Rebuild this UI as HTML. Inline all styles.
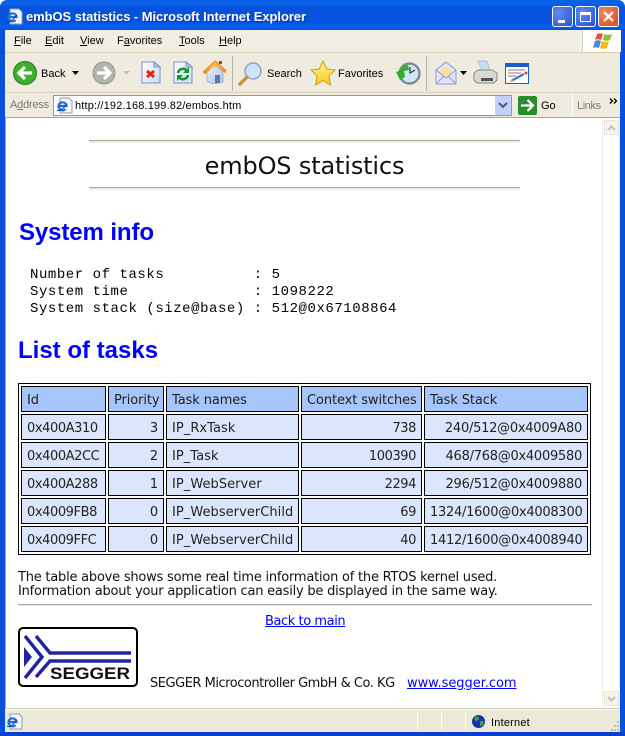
<!DOCTYPE html>
<html><head><meta charset="utf-8"><title>embOS statistics</title>
<style>
html,body{margin:0;padding:0;background:#fff}
#w{position:relative;width:625px;height:736px;overflow:hidden;background:#fff;font-family:"DejaVu Sans",sans-serif}
.a{position:absolute;white-space:pre}
.ui{font-family:"Liberation Sans",sans-serif;font-size:11px;color:#000;line-height:14px}
.b{position:absolute}
.t{font-size:13px;line-height:16px;color:#111;letter-spacing:-.22px}
.m{font-family:"Liberation Mono",monospace;font-size:14px;line-height:17px;color:#000;left:30px;letter-spacing:.55px}
h2{position:absolute;margin:0;left:18px;font:bold 24px/28px "Liberation Sans",sans-serif;color:#0000ff;letter-spacing:0}
.c{position:absolute;box-sizing:border-box;border:1px solid #000;background:#dbe6fd;height:26px;font-size:13px;line-height:28px;color:#222;padding:0 5px;white-space:pre;letter-spacing:-.1px;overflow:hidden}
.h{background:#a6c6fb}
.r{text-align:right}
.n{letter-spacing:-.42px}
.s{letter-spacing:-.26px}
.k{letter-spacing:.05px}
a{color:#0000ff;text-decoration:underline}
</style></head><body><div id="w">
<svg width="0" height="0" style="position:absolute"><defs>
<linearGradient id="pg" x1="0" y1="0" x2="1" y2="1"><stop offset="0" stop-color="#fff"/><stop offset="1" stop-color="#c9d9f6"/></linearGradient>
<linearGradient id="st" x1="0" y1="0" x2="0" y2="1"><stop offset="0" stop-color="#fff3a0"/><stop offset="1" stop-color="#f8c814"/></linearGradient>
<linearGradient id="hm" x1="0" y1="0" x2="1" y2="1"><stop offset="0" stop-color="#eef3fc"/><stop offset="1" stop-color="#a9c0ea"/></linearGradient>
</defs></svg>
<!-- title bar -->
<div class="b" style="left:0;top:0;width:625px;height:30px;background:linear-gradient(#0a5fe0 0,#0a63ea 3px,#0553dc 8px,#0553e0 22px,#0660f0 27px,#0350d8 30px);border-radius:7px 7px 0 0"></div>
<div class="b" style="left:0;top:30px;width:5px;height:706px;background:#0850dc"></div>
<div class="b" style="left:620px;top:30px;width:5px;height:706px;background:#0850dc"></div>
<div class="b" style="left:0;top:732px;width:625px;height:4px;background:#0a3fd0"></div>
<svg class="b" style="left:6px;top:8px" width="17" height="17" viewBox="0 0 17 17"><path d="M4 1h9l3 3v12H4z" fill="#f4f6fb" stroke="#8a9cba"/><path d="M2.500 9h8a4 4 0 1 0-1 3" fill="none" stroke="#1f6fd6" stroke-width="2.200"/><path d="M1 13c2 2 6-1 10-6" fill="none" stroke="#123e8c"/></svg>
<div class="a" style="left:26px;top:9px;font:bold 13px/16px 'Liberation Sans',sans-serif;color:#fff;letter-spacing:-.07px;text-shadow:1px 1px 0 #0a3a9c">embOS statistics - Microsoft Internet Explorer</div>
<!-- window buttons -->
<div class="b" style="left:552px;top:6px;width:21px;height:21px;box-sizing:border-box;border:1px solid #fff;border-radius:3px;background:radial-gradient(circle at 30% 30%,#5f8df0,#2a50d0)"></div>
<div class="b" style="left:558px;top:20px;width:7px;height:3px;background:#fff"></div>
<div class="b" style="left:575px;top:6px;width:21px;height:21px;box-sizing:border-box;border:1px solid #fff;border-radius:3px;background:radial-gradient(circle at 30% 30%,#5f8df0,#2a50d0)"></div>
<div class="b" style="left:580px;top:12px;width:11px;height:10px;box-sizing:border-box;border:1px solid #fff;border-top-width:3px"></div>
<div class="b" style="left:598px;top:6px;width:21px;height:21px;box-sizing:border-box;border:1px solid #fff;border-radius:3px;background:radial-gradient(circle at 30% 30%,#ef8a68,#d04a20)"></div>
<svg class="b" style="left:598px;top:6px" width="21" height="21"><path d="M6 6l9 9M15 6l-9 9" stroke="#fff" stroke-width="2.200"/></svg>
<!-- menu -->
<div class="b" style="left:5px;top:30px;width:615px;height:22px;background:#f1eee3;border-bottom:1px solid #d8d2bd"></div>
<div class="b" style="left:582px;top:30px;width:38px;height:22px;background:#fff;border-left:1px solid #d8d2bd"></div>
<svg class="b" style="left:592px;top:31px" width="22" height="20" viewBox="0 0 22 20"><path d="M5 3c2-1 4-1 6 0l-2 6c-2-1-4-1-6 0z" fill="#e8532a"/><path d="M12 3c2 1 5 1 8 0l-2 6c-3 1-5 1-7 0z" fill="#8ac832"/><path d="M3 10c2-1 4-1 6 0l-2 7c-2-1-4-1-6 0z" fill="#4a86e0"/><path d="M10 10c2 1 5 1 7 0l-2 7c-3 1-5 1-7 0z" fill="#f5b914"/></svg>
<span class="a ui" style="left:14px;top:34px"><u>F</u>ile</span>
<span class="a ui" style="left:45px;top:34px"><u>E</u>dit</span>
<span class="a ui" style="left:80px;top:34px"><u>V</u>iew</span>
<span class="a ui" style="left:117px;top:34px">F<u>a</u>vorites</span>
<span class="a ui" style="left:179px;top:34px"><u>T</u>ools</span>
<span class="a ui" style="left:219px;top:34px"><u>H</u>elp</span>
<!-- toolbar -->
<div class="b" style="left:5px;top:53px;width:615px;height:39px;background:#efebdf;border-bottom:1px solid #d8d2bd"></div>
<svg class="b" style="left:12px;top:60px" width="26" height="26" viewBox="0 0 26 26"><circle cx="13" cy="13" r="11.500" fill="#3fb02e" stroke="#1f7a1c"/><path d="M20 13H9M13 7l-6 6 6 6" fill="none" stroke="#fff" stroke-width="3.200"/></svg>
<span class="a ui" style="left:41px;top:67px">Back</span>
<svg class="b" style="left:72px;top:71px" width="7" height="4"><path d="M0 0h7L3.500 4z" fill="#000"/></svg>
<svg class="b" style="left:91px;top:60px" width="26" height="26" viewBox="0 0 26 26"><circle cx="13" cy="13" r="11" fill="#b5b4aa" stroke="#979689"/><path d="M6 13h11M13 7l6 6-6 6" fill="none" stroke="#fff" stroke-width="3.200"/></svg>
<svg class="b" style="left:123px;top:71px" width="7" height="4"><path d="M0 0h7L3.500 4z" fill="#c5c3b8"/></svg>
<svg class="b" style="left:141px;top:61px" width="20" height="23" viewBox="0 0 20 23"><path d="M1 1h12l6 5v16H1z" fill="url(#pg)" stroke="#7d93c8"/><path d="M13 1v5h6z" fill="#b8cbee" stroke="#7d93c8"/><path d="M6 10l7 6M13 10l-7 6" stroke="#e8240e" stroke-width="3"/></svg>
<svg class="b" style="left:173px;top:61px" width="20" height="23" viewBox="0 0 20 23"><path d="M1 1h12l6 5v16H1z" fill="url(#pg)" stroke="#7d93c8"/><path d="M13 1v5h6z" fill="#b8cbee" stroke="#7d93c8"/><path d="M5 12a5 5 0 0 1 9-2M15 14a5 5 0 0 1-9 2" fill="none" stroke="#17962a" stroke-width="2.600"/><path d="M16 6v6h-6zM4 20v-6h6z" fill="#17962a"/></svg>
<svg class="b" style="left:203px;top:60px" width="24" height="24" viewBox="0 0 24 24"><path d="M4 11l8-7 8 7v11l-6 1.500H9L4 21z" fill="url(#hm)" stroke="#8da4cc" stroke-width=".7"/><path d="M0 12L12 1l2 1.500 9 8-1 2L12 4.500 2 13.500z" fill="#f5a032" stroke="#e08a20" stroke-width="1"/><path d="M2 11L12 2l8 7-8-2z" fill="#fbb64a"/><rect x="12" y="15" width="5" height="8" fill="#5f78a8"/><rect x="16" y="1" width="3" height="3" fill="#b8352a"/></svg>
<div class="b" style="left:232px;top:56px;width:1px;height:35px;background:#b9b5a5"></div>
<svg class="b" style="left:238px;top:61px" width="25" height="25" viewBox="0 0 25 25"><circle cx="15" cy="10" r="8" fill="#cfe4fa" stroke="#8aa5c4" stroke-width="1.500"/><path d="M9 16L2 23" stroke="#c99240" stroke-width="3.400" stroke-linecap="round"/></svg>
<span class="a ui" style="left:267px;top:67px">Search</span>
<svg class="b" style="left:310px;top:60px" width="26" height="26" viewBox="0 0 26 26"><path d="M13 1l3.700 8 8.300 1-6 6 1.500 9L13 20.500 5.500 25 7 16 1 10l8.300-1z" fill="url(#st)" stroke="#c8a020"/></svg>
<span class="a ui" style="left:338px;top:67px">Favorites</span>
<svg class="b" style="left:396px;top:61px" width="25" height="25" viewBox="0 0 25 25"><circle cx="13.500" cy="12.500" r="10" fill="#cfe6f4" stroke="#7d8a98" stroke-width="2.400"/><path d="M14 6v6l5-3" stroke="#333" stroke-width="1.200" fill="none"/><path d="M5 7a8 8 0 0 1 7-3l1 5-5 1 1 6-5 3-4-8 3-1z" fill="#38aa2c"/></svg>
<div class="b" style="left:426px;top:56px;width:1px;height:35px;background:#b9b5a5"></div>
<svg class="b" style="left:435px;top:61px" width="23" height="25" viewBox="0 0 23 25"><path d="M1 9L11 1l10 8v14H1z" fill="#dfe6fb" stroke="#8f9cd8"/><path d="M4 11l7-6 7 6-7 5z" fill="#fbe2a0"/><path d="M1 9l10 8 10-8M1 23l8-8M21 23l-8-8" fill="none" stroke="#8f9cd8"/></svg>
<svg class="b" style="left:460px;top:71px" width="7" height="4"><path d="M0 0h7L3.500 4z" fill="#000"/></svg>
<svg class="b" style="left:473px;top:60px" width="25" height="26" viewBox="0 0 25 26"><path d="M5 1h9l3 10H9z" fill="#c8ddf5" stroke="#9db4d0" stroke-width=".7"/><path d="M1 13l4-3h14l5 3v7l-3 3H4l-3-3z" fill="#d9d9d2" stroke="#8a8a84"/><path d="M8 18h12v3H8z" fill="#555"/></svg>
<svg class="b" style="left:505px;top:63px" width="24" height="22" viewBox="0 0 24 22"><rect x=".5" y=".5" width="23" height="20" fill="#fff" stroke="#1a5fc8"/><rect x="1" y="1" width="22" height="3" fill="#1a5fc8"/><path d="M3 7h17M3 10h13M3 13h8" stroke="#9c7080"/><path d="M6 18l13-7" stroke="#3a7ad8" stroke-width="2.200"/><path d="M4 19l3-3 1 2z" fill="#e8c040"/><circle cx="21" cy="10" r="1.500" fill="#d8402a"/></svg>
<!-- address bar -->
<div class="b" style="left:5px;top:93px;width:615px;height:24px;background:#efebdf"></div>
<span class="a ui" style="left:10px;top:98px;color:#7b7a70;letter-spacing:-.2px">A<u>d</u>dress</span>
<div class="b" style="left:53px;top:95px;width:459px;height:21px;box-sizing:border-box;background:#fff;border:1px solid #7f9db9"></div>
<svg class="b" style="left:56px;top:97px" width="17" height="17" viewBox="0 0 17 17"><path d="M4 1h9l3 3v12H4z" fill="#f4f6fb" stroke="#8a9cba"/><path d="M2.500 9h8a4 4 0 1 0-1 3" fill="none" stroke="#1f6fd6" stroke-width="2.200"/><path d="M1 13c2 2 6-1 10-6" fill="none" stroke="#123e8c"/></svg>
<span class="a ui" style="left:75px;top:99px;letter-spacing:.16px">http://192.168.199.82/embos.htm</span>
<div class="b" style="left:495px;top:96px;width:16px;height:19px;background:#c3d1f6;border-radius:2px"></div>
<svg class="b" style="left:498px;top:102px" width="11" height="8"><path d="M1 1l4 4 4-4" fill="none" stroke="#3f5c8c" stroke-width="2"/></svg>
<svg class="b" style="left:518px;top:96px" width="19" height="19" viewBox="0 0 19 19"><rect width="19" height="19" rx="2" fill="#2a8c2a"/><path d="M3 9.500h11M9.500 4l5.500 5.500L9.500 15" fill="none" stroke="#fff" stroke-width="2.200"/></svg>
<span class="a ui" style="left:541px;top:99px">Go</span>
<div class="b" style="left:572px;top:94px;width:1px;height:22px;background:#fff"></div>
<span class="a ui" style="left:577px;top:99px;color:#7b7a70;letter-spacing:-.4px">Links</span>
<svg class="b" style="left:609px;top:98px" width="9" height="6"><path d="M1 .5l2.500 2.500L1 5.500M5 .5l2.500 2.500L5 5.500" fill="none" stroke="#000" stroke-width="1.300"/></svg>
<div class="b" style="left:5px;top:117px;width:615px;height:1px;background:#a9a799"></div>
<!-- page frame -->
<div class="b" style="left:5px;top:118px;width:1px;height:591px;background:#aca899"></div>
<div class="b" style="left:619px;top:118px;width:1px;height:591px;background:#f1efe2"></div>
<div class="b" style="left:602px;top:118px;width:1px;height:590px;background:#eeede5"></div>
<div class="b" style="left:604px;top:120px;width:15px;height:15px;background:#f4f3ec;border:1px solid #e8e6da;box-sizing:border-box"></div>
<svg class="b" style="left:606px;top:124px" width="11" height="8"><path d="M2 6l3.500-3.500L9 6" fill="none" stroke="#c5c2b2" stroke-width="2"/></svg>
<div class="b" style="left:604px;top:691px;width:15px;height:15px;background:#f4f3ec;border:1px solid #e8e6da;box-sizing:border-box"></div>
<svg class="b" style="left:606px;top:695px" width="11" height="8"><path d="M2 2l3.500 3.500L9 2" fill="none" stroke="#c5c2b2" stroke-width="2"/></svg>
<!-- page -->
<div class="b" style="left:89px;top:140px;width:431px;height:1px;background:#a9a799"></div>
<div class="b" style="left:89px;top:141px;width:431px;height:2px;background:#f0eee2"></div>
<div class="a" style="left:89px;width:431px;top:152px;text-align:center;font-size:24px;line-height:29px;color:#111;letter-spacing:-.15px">embOS statistics</div>
<div class="b" style="left:89px;top:187px;width:431px;height:1px;background:#a9a799"></div>
<div class="b" style="left:89px;top:188px;width:431px;height:2px;background:#f0eee2"></div>
<h2 style="top:219px;left:19px;letter-spacing:-.1px">System info</h2>
<div class="a m" style="top:267px">Number of tasks          : 5</div>
<div class="a m" style="top:284px">System time              : 1098222</div>
<div class="a m" style="top:301px">System stack (size@base) : 512@0x67108864</div>
<h2 style="top:337px">List of tasks</h2>
<div class="b" style="left:18px;top:383px;width:573px;height:172px;box-sizing:border-box;border:1px solid #000"></div>
<div class="c h" style="left:21px;top:386px;width:85px">Id</div><div class="c h" style="left:108px;top:386px;width:56px">Priority</div><div class="c h" style="left:166px;top:386px;width:133px">Task names</div><div class="c h" style="left:301px;top:386px;width:121px">Context switches</div><div class="c h" style="left:424px;top:386px;width:164px">Task Stack</div>
<div class="c n" style="left:21px;top:414px;width:85px">0x400A310</div><div class="c r" style="left:108px;top:414px;width:56px">3</div><div class="c k" style="left:166px;top:414px;width:133px">IP_RxTask</div><div class="c r n" style="left:301px;top:414px;width:121px">738</div><div class="c r s" style="left:424px;top:414px;width:164px">240/512@0x4009A80</div>
<div class="c n" style="left:21px;top:442px;width:85px">0x400A2CC</div><div class="c r" style="left:108px;top:442px;width:56px">2</div><div class="c k" style="left:166px;top:442px;width:133px">IP_Task</div><div class="c r n" style="left:301px;top:442px;width:121px">100390</div><div class="c r s" style="left:424px;top:442px;width:164px">468/768@0x4009580</div>
<div class="c n" style="left:21px;top:470px;width:85px">0x400A288</div><div class="c r" style="left:108px;top:470px;width:56px">1</div><div class="c k" style="left:166px;top:470px;width:133px">IP_WebServer</div><div class="c r n" style="left:301px;top:470px;width:121px">2294</div><div class="c r s" style="left:424px;top:470px;width:164px">296/512@0x4009880</div>
<div class="c n" style="left:21px;top:498px;width:85px">0x4009FB8</div><div class="c r" style="left:108px;top:498px;width:56px">0</div><div class="c k" style="left:166px;top:498px;width:133px">IP_WebserverChild</div><div class="c r n" style="left:301px;top:498px;width:121px">69</div><div class="c r s" style="left:424px;top:498px;width:164px">1324/1600@0x4008300</div>
<div class="c n" style="left:21px;top:526px;width:85px">0x4009FFC</div><div class="c r" style="left:108px;top:526px;width:56px">0</div><div class="c k" style="left:166px;top:526px;width:133px">IP_WebserverChild</div><div class="c r n" style="left:301px;top:526px;width:121px">40</div><div class="c r s" style="left:424px;top:526px;width:164px">1412/1600@0x4008940</div>
<div class="a t" style="left:18px;top:570px">The table above shows some real time information of the RTOS kernel used.</div>
<div class="a t" style="left:18px;top:584px">Information about your application can easily be displayed in the same way.</div>
<div class="b" style="left:18px;top:604px;width:574px;height:1px;background:#aca899"></div>
<div class="b" style="left:18px;top:605px;width:574px;height:1px;background:#ece9d8"></div>
<a class="a t" style="left:265px;top:614px;color:#0000ff;letter-spacing:-.43px" href="#">Back to main</a>
<svg class="b" style="left:18px;top:627px" width="120" height="60" viewBox="0 0 120 60"><rect x="1" y="1" width="118" height="58" rx="4" fill="#fff" stroke="#000" stroke-width="2"/><path d="M6 20l8 10-8 10z" fill="#2323a0"/><path d="M7 9l17 21L7 51M18 9l14 17h81M18 50l14-16h81" fill="none" stroke="#2323a0" stroke-width="3.400"/><text x="32" y="52" font-family="Liberation Sans,sans-serif" font-weight="bold" font-size="17" textLength="80" lengthAdjust="spacingAndGlyphs" fill="#111">SEGGER</text></svg>
<div class="a t" style="left:150px;top:676px;letter-spacing:-.48px">SEGGER Microcontroller GmbH &amp; Co. KG</div>
<a class="a t" style="left:407px;top:676px;color:#0000ff;letter-spacing:-.05px" href="#">www.segger.com</a>
<!-- status bar -->
<div class="b" style="left:5px;top:708px;width:615px;height:1px;background:#cfccbd"></div>
<div class="b" style="left:5px;top:710px;width:615px;height:22px;background:#ece9d9"></div>
<svg class="b" style="left:6px;top:713px" width="17" height="17" viewBox="0 0 17 17"><path d="M4 1h9l3 3v12H4z" fill="#f4f6fb" stroke="#8a9cba"/><path d="M2.500 9h8a4 4 0 1 0-1 3" fill="none" stroke="#1f6fd6" stroke-width="2.200"/><path d="M1 13c2 2 6-1 10-6" fill="none" stroke="#123e8c"/></svg>
<div class="b" style="left:417px;top:712px;width:1px;height:18px;background:#fff"></div>
<div class="b" style="left:441px;top:712px;width:1px;height:18px;background:#fff"></div>
<div class="b" style="left:465px;top:712px;width:1px;height:18px;background:#fff"></div>
<svg class="b" style="left:472px;top:715px" width="13" height="13" viewBox="0 0 13 13"><circle cx="6.500" cy="6.500" r="6.500" fill="#1530b0"/><path d="M2 3l4-2 1 3-3 3zM8 6l4 0-1 4-3 1z" fill="#3aa82a"/></svg>
<span class="a ui" style="left:491px;top:716px;letter-spacing:.2px">Internet</span>
<svg class="b" style="left:610px;top:720px" width="10" height="12"><path d="M7 1h2v2H7zM4 5h2v2H4zM7 5h2v2H7zM1 9h2v2H1zM4 9h2v2H4zM7 9h2v2H7z" fill="#c2bfae"/></svg>
</div></body></html>
